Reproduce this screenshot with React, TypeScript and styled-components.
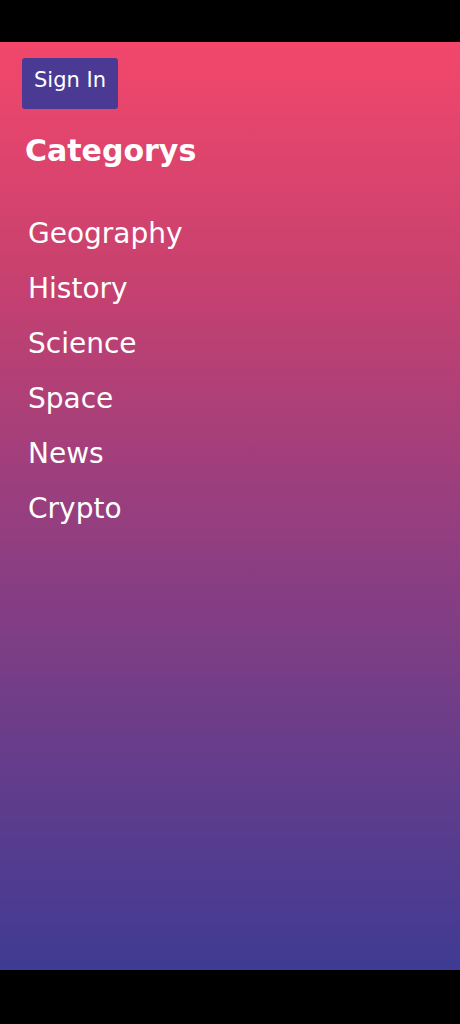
import styled, { createGlobalStyle } from 'styled-components';

const GlobalStyle = createGlobalStyle`
  body {
    margin: 0;
    background: #000;
    font-family: "DejaVu Sans", "Open Sans", sans-serif;
  }
`;

const categories = ['Geography', 'History', 'Science', 'Space', 'News', 'Crypto'];

export default function App() {
  return (
    <>
      <GlobalStyle />
      <Screen>
        <Drawer>
          <SignInBtn type="button">Sign In</SignInBtn>
          <Title>Categorys</Title>
          <List>
            {categories.map((c) => (
              <Item key={c}>{c}</Item>
            ))}
          </List>
        </Drawer>
      </Screen>
    </>
  );
}

const Screen = styled.div`
  width: 460px;
  height: 1024px;
  padding-top: 42px;
  box-sizing: border-box;
  background: #000;
`;

const Drawer = styled.nav`
  height: 928px;
  box-sizing: border-box;
  padding: 16px 22px;
  display: flex;
  flex-direction: column;
  align-items: flex-start;
  background: linear-gradient(
    180deg,
    #f3476b 0%,
    #c8416f 25%,
    #9a3e7e 49%,
    #6a3d8a 75%,
    #3f3b93 100%
  );
`;

const SignInBtn = styled.button`
  width: 96px;
  height: 51px;
  border: none;
  border-radius: 3px;
  background: #4a3a94;
  color: #fff;
  font-family: inherit;
  font-size: 21px;
  padding: 0 0 7px;
  cursor: pointer;
`;

const Title = styled.h2`
  margin: 24px 0 0 3px;
  color: #fff;
  font-size: 30px;
  font-weight: 700;
  line-height: 36px;
`;

const List = styled.ul`
  list-style: none;
  margin: 37px 0 0 6px;
  padding: 0;
  display: flex;
  flex-direction: column;
`;

const Item = styled.li`
  color: #fff;
  font-size: 28px;
  line-height: 55px;
  cursor: pointer;
`;
